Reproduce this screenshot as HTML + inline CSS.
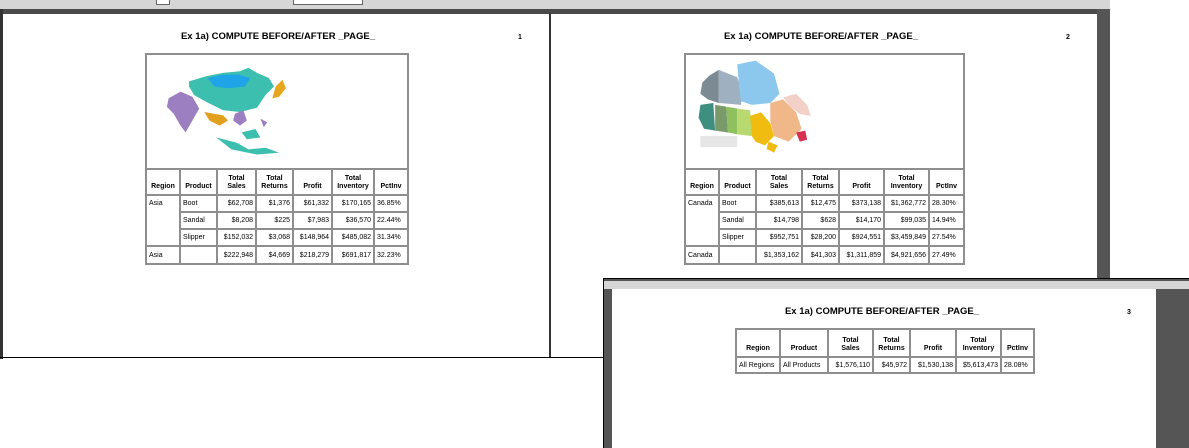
<!DOCTYPE html>
<html><head><meta charset="utf-8"><style>
*{margin:0;padding:0;box-sizing:border-box}
body{width:1189px;height:448px;background:#fff;position:relative;overflow:hidden;font-family:"Liberation Sans",Arial,sans-serif}
.abs{position:absolute}
.title{position:absolute;font-size:9.5px;font-weight:bold;white-space:nowrap;transform:translateX(-50%)}
.num{position:absolute;font-size:7px;font-weight:bold}
table{position:absolute;border-collapse:collapse;font-size:7px;table-layout:fixed}
td{border:2px solid #8e8e8e;padding:0 2px;white-space:nowrap;overflow:hidden}
tr.h td{font-weight:bold;text-align:center;vertical-align:bottom;padding-bottom:3px;line-height:8px}
td.r{text-align:right}
td.map{background:#fff;padding:0}
</style></head><body>
<div class="abs" style="left:0;top:0;width:1110px;height:9px;background:#d6d6d6"></div>
<div class="abs" style="left:0;top:9px;width:1110px;height:5px;background:#4a4a4a"></div>
<div class="abs" style="left:0;top:9px;width:3px;height:350px;background:#333"></div>
<div class="abs" style="left:549px;top:13px;width:2px;height:345px;background:#333"></div>
<div class="abs" style="left:1097px;top:9px;width:13px;height:270px;background:#555"></div>
<div class="abs" style="left:0;top:357px;width:604px;height:1px;background:#000"></div>
<div class="abs" style="left:156px;top:0;width:14px;height:5px;border:1px solid #666;border-top:0;background:#fff"></div>
<div class="abs" style="left:293px;top:0;width:70px;height:5px;border:1px solid #666;border-top:0;background:#fff"></div>

<div class="title" style="left:278px;top:31px">Ex 1a) COMPUTE BEFORE/AFTER _PAGE_</div>
<div class="num" style="left:518px;top:34px">1</div>
<table style="left:145px;top:53px;width:262px">
<colgroup><col style="width:34px"><col style="width:37px"><col style="width:39px"><col style="width:37px"><col style="width:39px"><col style="width:42px"><col style="width:34px"></colgroup>
<tr><td colspan="7" class="map" style="height:113px"><svg width="258" height="111" viewBox="0 0 258 111">
<g transform="translate(8,6) scale(0.85)">
<path d="M40 24 L60 18 L80 14 L100 12 L110 8 L120 14 L134 20 L140 30 L130 40 L120 55 L100 60 L80 58 L60 48 L46 40 L40 30Z" fill="#3dbfb0"/>
<path d="M62 20 L80 16 L98 16 L112 20 L106 30 L86 32 L70 30Z" fill="#1fa4e8"/>
<path d="M16 44 L30 36 L44 42 L52 56 L44 70 L36 84 L30 76 L22 62 L14 54Z" fill="#9b7fc0"/>
<path d="M58 60 L80 64 L86 70 L76 76 L64 70Z" fill="#e2a01e"/>
<path d="M94 62 L104 58 L108 70 L100 76 L92 70Z" fill="#9b7fc0"/>
<path d="M142 30 L150 22 L154 32 L146 42 L138 44Z" fill="#e8a51e"/>
<path d="M72 90 L96 96 L110 104 L130 102 L146 108 L120 110 L90 104Z" fill="#3dbfb0"/>
<path d="M102 84 L118 80 L124 90 L108 92Z" fill="#3dbfb0"/>
<path d="M124 68 L132 72 L128 78Z" fill="#9b7fc0"/>
</g>
</svg></td></tr>
<tr class="h" style="height:26px"><td>Region</td><td>Product</td><td>Total<br>Sales</td><td>Total<br>Returns</td><td>Profit</td><td>Total<br>Inventory</td><td>PctInv</td></tr>
<tr style="height:17px"><td rowspan="3" style="vertical-align:top;padding-top:4px">Asia</td><td>Boot</td><td class="r">$62,708</td><td class="r">$1,376</td><td class="r">$61,332</td><td class="r">$170,165</td><td>36.85%</td></tr>
<tr style="height:17px"><td>Sandal</td><td class="r">$8,208</td><td class="r">$225</td><td class="r">$7,983</td><td class="r">$36,570</td><td>22.44%</td></tr>
<tr style="height:17px"><td>Slipper</td><td class="r">$152,032</td><td class="r">$3,068</td><td class="r">$148,964</td><td class="r">$485,082</td><td>31.34%</td></tr>
<tr style="height:18px"><td>Asia</td><td></td><td class="r">$222,948</td><td class="r">$4,669</td><td class="r">$218,279</td><td class="r">$691,817</td><td>32.23%</td></tr>
</table>

<div class="title" style="left:821px;top:31px">Ex 1a) COMPUTE BEFORE/AFTER _PAGE_</div>
<div class="num" style="left:1066px;top:34px">2</div>
<table style="left:684px;top:53px;width:279px">
<colgroup><col style="width:34px"><col style="width:37px"><col style="width:46px"><col style="width:37px"><col style="width:45px"><col style="width:45px"><col style="width:35px"></colgroup>
<tr><td colspan="7" class="map" style="height:113px"><svg width="275" height="111" viewBox="0 0 275 111">
<g transform="translate(-4,2) scale(0.92)">
<path d="M30 20 L40 14 L40 50 L28 46 L20 40 L22 28Z" fill="#7c8a94"/>
<path d="M40 14 L60 22 L66 38 L64 52 L40 50Z" fill="#9fb0c0"/>
<path d="M60 8 L80 4 L100 18 L106 40 L96 50 L76 52 L64 48 L62 30Z" fill="#8cc8ee"/>
<path d="M20 52 L34 50 L36 80 L24 78 L18 66Z" fill="#3f8f80"/>
<path d="M36 52 L48 54 L50 82 L36 80Z" fill="#7a9a6a"/>
<path d="M48 54 L60 56 L60 84 L50 82Z" fill="#8fc060"/>
<path d="M60 56 L74 58 L76 86 L60 84Z" fill="#b8d870"/>
<path d="M74 64 L86 60 L96 72 L100 86 L90 96 L80 92 L76 86Z" fill="#f0bc10"/>
<path d="M96 50 L110 46 L124 60 L130 78 L116 92 L100 86 L96 70Z" fill="#f0b888"/>
<path d="M110 44 L124 40 L136 52 L140 64 L128 62 L118 54Z" fill="#f2d0c8"/>
<path d="M124 82 L134 80 L136 90 L128 92Z" fill="#d83050"/>
<path d="M94 92 L104 96 L100 104 L92 100Z" fill="#f0bc10"/>
<path d="M20 86 L60 86 L60 98 L20 98Z" fill="#e6e6e6"/>
</g>
</svg></td></tr>
<tr class="h" style="height:26px"><td>Region</td><td>Product</td><td>Total<br>Sales</td><td>Total<br>Returns</td><td>Profit</td><td>Total<br>Inventory</td><td>PctInv</td></tr>
<tr style="height:17px"><td rowspan="3" style="vertical-align:top;padding-top:4px">Canada</td><td>Boot</td><td class="r">$385,613</td><td class="r">$12,475</td><td class="r">$373,138</td><td class="r">$1,362,772</td><td>28.30%</td></tr>
<tr style="height:17px"><td>Sandal</td><td class="r">$14,798</td><td class="r">$628</td><td class="r">$14,170</td><td class="r">$99,035</td><td>14.94%</td></tr>
<tr style="height:17px"><td>Slipper</td><td class="r">$952,751</td><td class="r">$28,200</td><td class="r">$924,551</td><td class="r">$3,459,849</td><td>27.54%</td></tr>
<tr style="height:18px"><td>Canada</td><td></td><td class="r">$1,353,162</td><td class="r">$41,303</td><td class="r">$1,311,859</td><td class="r">$4,921,656</td><td>27.49%</td></tr>
</table>

<div class="abs" style="left:603px;top:278px;width:586px;height:170px;background:#555;border-left:1px solid #000;border-top:1px solid #000"></div>
<div class="abs" style="left:604px;top:281px;width:585px;height:8px;background:#d6d6d6"></div>
<div class="abs" style="left:612px;top:289px;width:544px;height:159px;background:#fff"></div>
<div class="title" style="left:882px;top:306px">Ex 1a) COMPUTE BEFORE/AFTER _PAGE_</div>
<div class="num" style="left:1127px;top:309px">3</div>
<table style="left:735px;top:328px;width:298px">
<colgroup><col style="width:44px"><col style="width:48px"><col style="width:45px"><col style="width:37px"><col style="width:46px"><col style="width:45px"><col style="width:33px"></colgroup>
<tr class="h" style="height:28px"><td>Region</td><td>Product</td><td>Total<br>Sales</td><td>Total<br>Returns</td><td>Profit</td><td>Total<br>Inventory</td><td>PctInv</td></tr>
<tr style="height:16px"><td>All Regions</td><td>All Products</td><td class="r">$1,576,110</td><td class="r">$45,972</td><td class="r">$1,530,138</td><td class="r">$5,613,473</td><td>28.08%</td></tr>
</table>
</body></html>
